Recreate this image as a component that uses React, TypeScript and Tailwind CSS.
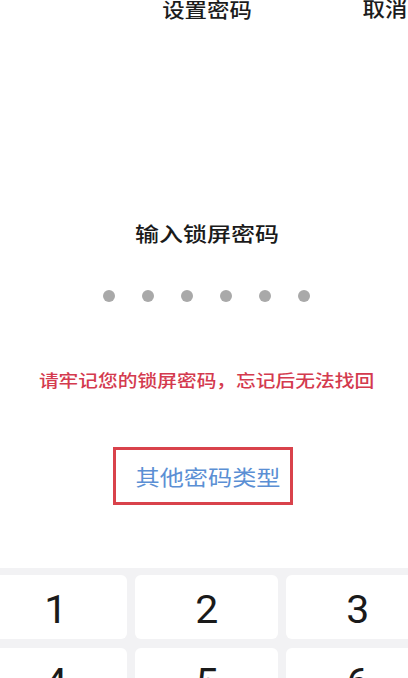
const cjk = "font-['Noto_Sans_CJK_SC','Noto_Sans',sans-serif]"

const keys = ['1', '2', '3', '4', '5', '6', '7', '8', '9']

function PinDots({ count }: { count: number }) {
  return (
    <div className="mt-[42px] flex justify-center gap-[27px]">
      {Array.from({ length: count }).map((_, i) => (
        <span key={i} className="block h-[12px] w-[12px] rounded-full bg-[#a9a9a9]" />
      ))}
    </div>
  )
}

function Keypad() {
  return (
    <div className="mt-[63px] grid grid-cols-3 gap-x-2 gap-y-[9px] bg-[#f2f2f4] px-2 pt-[7px] pb-2">
      {keys.map((k) => (
        <button
          key={k}
          className="flex h-[64px] items-center justify-center rounded-[6px] bg-white pt-[6px]"
        >
          <span className="inline-block scale-x-[1.08] font-['Roboto',sans-serif] text-[38px] leading-none text-[#1a1a1a]">
            {k}
          </span>
        </button>
      ))}
    </div>
  )
}

export default function App() {
  return (
    <div className={`h-[678px] w-[408px] overflow-hidden bg-white ${cjk}`}>
      <div className="-ml-[24px] flex w-[461px] flex-col">
        {/* header */}
        <div className="-mt-[2px] grid h-[22px] grid-cols-[1fr_auto_1fr] items-center">
          <span />
          <span className="inline-block scale-x-[1.12] text-[20px] font-medium leading-[20px] text-[#1c1c1c]">
            设置密码
          </span>
          <span className="justify-self-end pr-[32px]">
            <span className="inline-block scale-x-[1.12] text-[20px] font-medium leading-[20px] text-[#1c1c1c]">
              取消
            </span>
          </span>
        </div>

        <div className="mt-[200px] flex h-[28px] items-center justify-center">
          <span className="inline-block scale-x-[1.2] text-[20px] font-medium leading-[28px] text-[#1a1a1a]">
            输入锁屏密码
          </span>
        </div>

        <PinDots count={6} />

        <div className="mt-[66px] flex h-[24px] items-center justify-center">
          <span className="inline-block scale-x-[1.16] text-[17px] font-medium leading-[24px] text-[#d43a4e]">
            请牢记您的锁屏密码，忘记后无法找回
          </span>
        </div>

        <div className="mt-[55px] flex justify-center">
          <div className="mr-[7px] flex h-[58px] w-[180px] items-center justify-center border-[3px] border-[#d9424b] pl-[9px]">
            <span className="inline-block scale-x-[1.15] text-[21px] leading-[28px] text-[#5b8fd4]">
              其他密码类型
            </span>
          </div>
        </div>

        <Keypad />
      </div>
    </div>
  )
}
